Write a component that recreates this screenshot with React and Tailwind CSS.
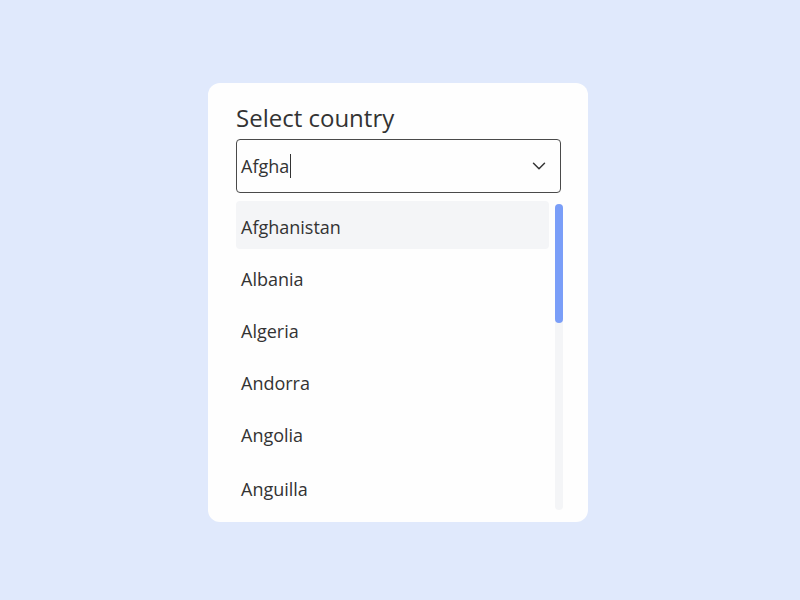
import { ChevronDown } from 'lucide-react';

const countries = ['Afghanistan', 'Albania', 'Algeria', 'Andorra', 'Angolia', 'Anguilla'];

export default function App() {
  return (
    <div
      className="min-h-screen w-full bg-[#e0e9fc] flex justify-center pt-[83px]"
      style={{ fontFamily: '"Open Sans", "Liberation Sans", sans-serif' }}
    >
      <div className="w-[380px] h-[439px] mr-[4px] bg-[#fefefe] rounded-xl pl-[28px] pr-[27px] pt-[19px] flex flex-col">
        {/* Label */}
        <h1 className="text-[24px] leading-[32px] text-[#333333] font-normal">Select country</h1>

        {/* Input */}
        <div className="mt-[5px] h-[54px] border border-[#4a4a4a] rounded-[4px] flex items-center pl-[4px] pr-[10px]">
          <span className="text-[18px] text-[#333333]">Afgha</span>
          <span className="w-px h-[24px] bg-[#333333] ml-[1px]" />
          <ChevronDown size={22} strokeWidth={1.6} className="ml-auto text-[#333333]" />
        </div>

        {/* Options */}
        <div className="mt-[8px] -mr-[2px] h-[311px] flex gap-[6px] overflow-hidden">
          <ul className="flex-1 flex flex-col gap-1">
            {countries.map((c, i) => (
              <li
                key={c}
                className={`h-12 shrink-0 flex items-center px-[5px] pt-1 rounded-[4px] text-[18px] text-[#333333] ${i === 0 ? 'bg-[#f4f5f7]' : ''} ${i === countries.length - 1 ? 'mt-[2px]' : ''}`}
              >
                {c}
              </li>
            ))}
          </ul>
          <div className="w-2 mt-[3px] h-[306px] rounded-full bg-[#f4f5f7]">
            <div className="h-[119px] rounded-full bg-[#7a9ef8]" />
          </div>
        </div>
      </div>
    </div>
  );
}
